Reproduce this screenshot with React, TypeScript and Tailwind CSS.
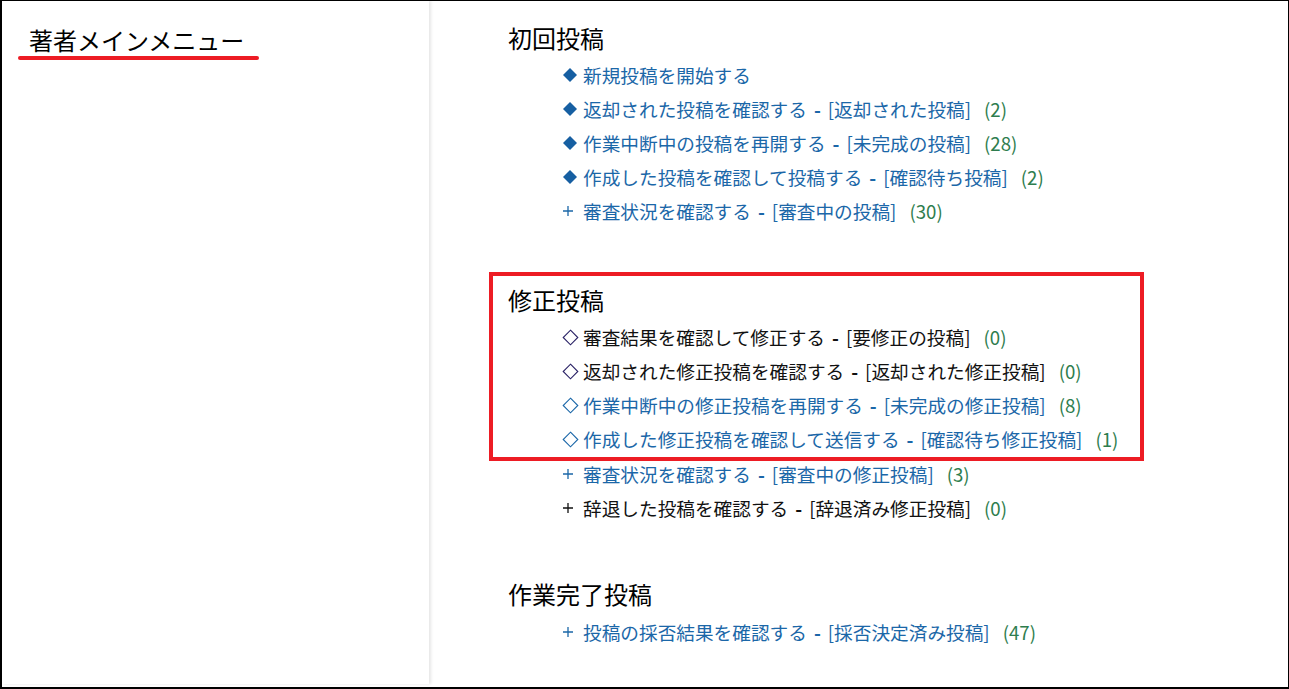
import React from "react";

type Item = {
  m: "◆" | "◇" | "+";
  text: string;
  tag?: string;
  n?: number;
  blue: boolean;
};

type Section = { title: string; items: Item[]; boxed?: number };

const sections: Section[] = [
  {
    title: "初回投稿",
    items: [
      { m: "◆", text: "新規投稿を開始する", blue: true },
      { m: "◆", text: "返却された投稿を確認する", tag: "返却された投稿", n: 2, blue: true },
      { m: "◆", text: "作業中断中の投稿を再開する", tag: "未完成の投稿", n: 28, blue: true },
      { m: "◆", text: "作成した投稿を確認して投稿する", tag: "確認待ち投稿", n: 2, blue: true },
      { m: "+", text: "審査状況を確認する", tag: "審査中の投稿", n: 30, blue: true },
    ],
  },
  {
    title: "修正投稿",
    boxed: 4,
    items: [
      { m: "◇", text: "審査結果を確認して修正する", tag: "要修正の投稿", n: 0, blue: false },
      { m: "◇", text: "返却された修正投稿を確認する", tag: "返却された修正投稿", n: 0, blue: false },
      { m: "◇", text: "作業中断中の修正投稿を再開する", tag: "未完成の修正投稿", n: 8, blue: true },
      { m: "◇", text: "作成した修正投稿を確認して送信する", tag: "確認待ち修正投稿", n: 1, blue: true },
      { m: "+", text: "審査状況を確認する", tag: "審査中の修正投稿", n: 3, blue: true },
      { m: "+", text: "辞退した投稿を確認する", tag: "辞退済み修正投稿", n: 0, blue: false },
    ],
  },
  {
    title: "作業完了投稿",
    items: [
      { m: "+", text: "投稿の採否結果を確認する", tag: "採否決定済み投稿", n: 47, blue: true },
    ],
  },
];

function Marker({ m, blue }: { m: Item["m"]; blue: boolean }) {
  if (m === "◆") {
    return (
      <span className="inline-flex w-[21px] shrink-0 items-center">
        <svg width="16" height="16" viewBox="0 0 16 16">
          <path d="M8 1 L15 8 L8 15 L1 8 Z" fill="#165fa2" />
        </svg>
      </span>
    );
  }
  if (m === "◇") {
    return (
      <span className="inline-flex w-[21px] shrink-0 items-center">
        <svg width="17" height="17" viewBox="0 0 17 17">
          <path
            d="M8.5 1.2 L15.8 8.5 L8.5 15.8 L1.2 8.5 Z"
            fill="none"
            stroke={blue ? "#1b67a8" : "#2a2266"}
            strokeWidth="1.1"
          />
        </svg>
      </span>
    );
  }
  return (
    <span className="inline-flex w-[21px] shrink-0 items-center">
      <svg width="12" height="12" viewBox="0 0 12 12">
        <path
          d="M6 1 V11 M1 6 H11"
          stroke={blue ? "#1b67a8" : "#111111"}
          strokeWidth="1.3"
        />
      </svg>
    </span>
  );
}

function Row({ item }: { item: Item }) {
  const color = item.blue ? "text-[#1b67a8]" : "text-[#111111]";
  return (
    <div className={`flex h-[34px] items-center pl-[54px] text-[18.67px] leading-[34px] whitespace-nowrap ${color}`}>
      <Marker m={item.m} blue={item.blue} />
      <span>{item.text}</span>
      {item.tag && (
        <>
          <span className="px-[7px] font-bold">-</span>
          <span>[{item.tag}]</span>
          <span className="pl-[13px] text-[#2e7d4e]">({item.n})</span>
        </>
      )}
    </div>
  );
}

function Heading({ title }: { title: string }) {
  return <div className="h-[36px] text-[24px] leading-[36px] text-black">{title}</div>;
}

export default function App() {
  return (
    <div
      className="box-border flex h-[689px] w-full overflow-hidden border-t border-r border-b-2 border-l-2 border-black bg-white"
      style={{ fontFamily: '"Noto Sans CJK JP", "Noto Sans", sans-serif' }}
    >
      <aside className="relative mb-[3px] w-[427px] shrink-0 bg-white shadow-[2px_0_3px_rgba(0,0,0,0.10)]">
        <div className="pt-[22px]">
          <div className="pl-[27px] text-[24px] leading-[33px] text-black">著者メインメニュー</div>
          <div className="ml-[16px] h-[4px] w-[241px] rounded-full bg-[#ed1c24]" />
        </div>
      </aside>
      <main className="flex-1 pl-[79px] pt-[19px]">
        {/* 初回投稿 */}
        <section>
          <Heading title={sections[0].title} />
          <div className="mt-[2px]">
            {sections[0].items.map((it, i) => (
              <Row key={i} item={it} />
            ))}
          </div>
        </section>

        {/* 修正投稿 */}
        <section className="mt-[44px]">
          <div className="-ml-[19px] w-[655px] border-4 border-[#ed1c24] pt-[6px] pb-[1px] pl-[15px]">
            <Heading title={sections[1].title} />
            <div className="mt-[2px]">
              {sections[1].items.slice(0, 4).map((it, i) => (
                <Row key={i} item={it} />
              ))}
            </div>
          </div>
          <div className="-mt-[4px]">
            {sections[1].items.slice(4).map((it, i) => (
              <Row key={i} item={it} />
            ))}
          </div>
        </section>

        {/* 作業完了投稿 */}
        <section className="mt-[51px]">
          <Heading title={sections[2].title} />
          <div className="mt-[3px]">
            {sections[2].items.map((it, i) => (
              <Row key={i} item={it} />
            ))}
          </div>
        </section>
      </main>
    </div>
  );
}
